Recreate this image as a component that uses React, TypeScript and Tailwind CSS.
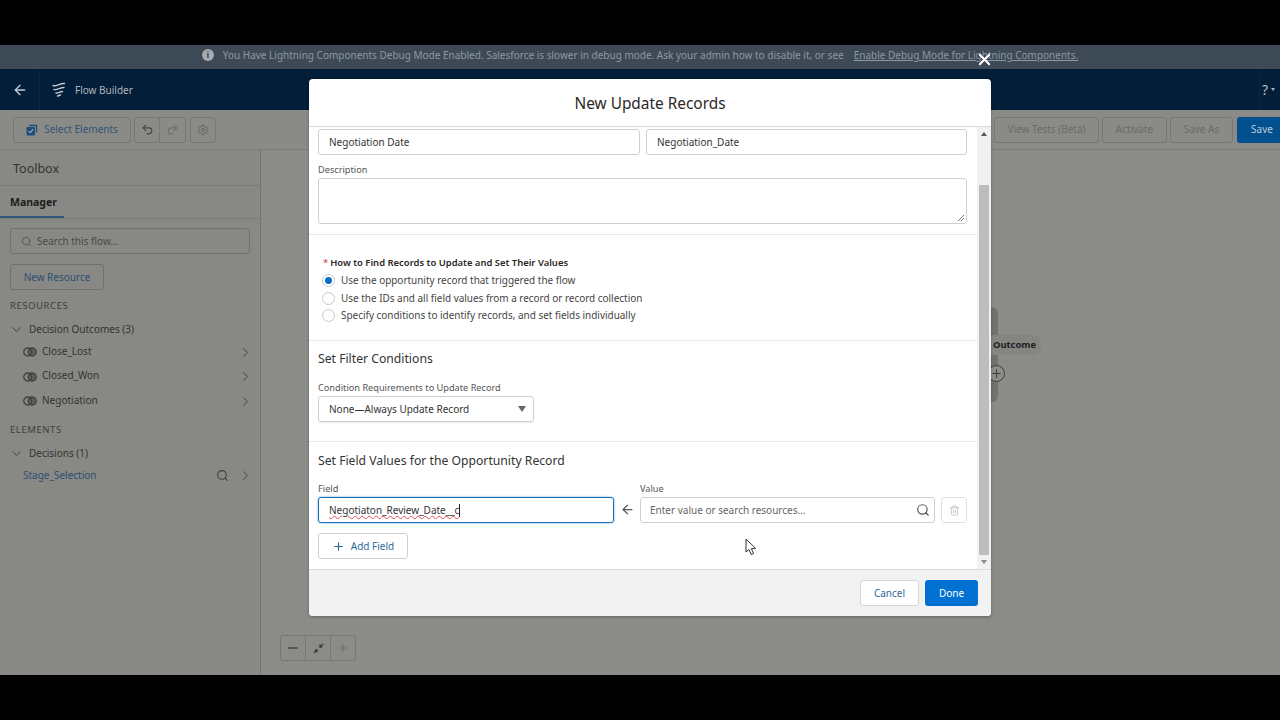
import { ArrowLeft, ChevronDown, ChevronRight, Plus, Redo2, Search, Settings, Trash2, Undo2, X, Minus } from "lucide-react";

const font = { fontFamily: '"Noto Sans", "Open Sans", sans-serif' };

function FlowLogo() {
  return (
    <svg width="15" height="15" viewBox="0 0 15 15" fill="none" stroke="#c3ccd6" strokeWidth="1.4" strokeLinecap="round">
      <path d="M1 3.5 C4 5 8 1 12.5 1.5" />
      <path d="M2 7.5 C5 8.5 8 5.5 12 5.5" />
      <path d="M4 11 C6 11.5 8 9.5 10.5 9.5" />
      <path d="M5.5 14 C6.5 14 7.5 13 8.5 13" />
    </svg>
  );
}

function OutcomeIcon() {
  return (
    <svg width="14" height="10" viewBox="0 0 14 10" fill="none" className="shrink-0">
      <circle cx="4.8" cy="5" r="4" stroke="#3f3f3d" strokeWidth="1.3" />
      <circle cx="9.2" cy="5" r="4" stroke="#3f3f3d" strokeWidth="1.3" fill="#3f3f3d" fillOpacity="0.55" />
    </svg>
  );
}

function ResourceRow({ name }: { name: string }) {
  return (
    <div className="flex items-center justify-between pl-[23px] pr-[7px] h-[24.5px]">
      <div className="flex items-center gap-[5px] text-[10px] text-[#333331]">
        <OutcomeIcon />
        <span className="-mt-[2px]">{name}</span>
      </div>
      <ChevronRight size={15} color="#3f3f3d" strokeWidth={1.5} />
    </div>
  );
}

function SectionLabel({ children }: { children: string }) {
  return <div className="text-[9.5px] leading-[14px] tracking-[0.06em] text-[#3f3f3d] pl-[10px] uppercase">{children}</div>;
}

function Sidebar() {
  return (
    <aside className="w-[261px] shrink-0 border-r border-[#747471] bg-[#888885]">
      <div className="h-[36px] pl-[13px] pt-[4px] flex items-center text-[12.5px] text-[#343432] border-b border-[#7c7c79]">Toolbox</div>
      <div className="h-[33px] border-b border-[#7c7c79] relative pl-[10px] pt-[1px] flex items-center text-[10.5px] font-bold text-[#1c1c1b]">
        Manager
        <div className="absolute left-0 bottom-0 w-[64px] h-[2px] bg-[#35577c]" />
      </div>
      <div className="mx-[10px] mt-[9px] h-[26px] border border-[#6f6f6c] rounded-[3px] flex items-center pl-[10px] gap-[5px] text-[10px] text-[#4a4a48]">
        <Search size={11} color="#555553" />
        Search this flow...
      </div>
      <div className="ml-[10px] mt-[10px] w-[94px] h-[26px] border border-[#6f6f6c] rounded-[3px] flex items-center justify-center text-[10px] text-[#2e4f70]">
        New Resource
      </div>
      <div className="mt-[9px]"><SectionLabel>Resources</SectionLabel></div>
      <div className="mt-[6px] flex items-center pl-[9px] gap-[5px] h-[20px] text-[10px] text-[#333331]">
        <ChevronDown size={15} color="#3f3f3d" strokeWidth={1.5} />
        Decision Outcomes (3)
      </div>
      <div className="mt-[1px]">
        <ResourceRow name="Close_Lost" />
        <ResourceRow name="Closed_Won" />
        <ResourceRow name="Negotiation" />
      </div>
      <div className="mt-[9px]"><SectionLabel>Elements</SectionLabel></div>
      <div className="mt-[7px] flex items-center pl-[9px] gap-[5px] h-[20px] text-[10px] text-[#333331]">
        <ChevronDown size={15} color="#3f3f3d" strokeWidth={1.5} />
        Decisions (1)
      </div>
      <div className="h-[22px] mt-[1px] flex items-center justify-between pl-[23px] pr-[7px] text-[10px] text-[#2e4f70]">
        Stage_Selection
        <div className="flex items-center gap-[9px]">
          <Search size={13} color="#3f3f3d" />
          <ChevronRight size={15} color="#3f3f3d" strokeWidth={1.5} />
        </div>
      </div>
    </aside>
  );
}

function ToolButton({ children, w }: { children: string; w: string }) {
  return (
    <div className={`h-[26px] ${w} border border-[#777774] rounded-[3px] flex items-center justify-center text-[10px] text-[#6a6a67]`}>
      {children}
    </div>
  );
}

function Radio({ label, on }: { label: string; on?: boolean }) {
  return (
    <div className="flex items-center gap-[6px] h-[17.4px] text-[9.95px] text-[#444] -ml-[1px]">
      <span className="w-[13px] h-[13px] rounded-full border border-[#c9c9c9] bg-white flex items-center justify-center">
        {on && <span className="w-[7px] h-[7px] rounded-full bg-[#0a6cc2]" />}
      </span>
      {label}
    </div>
  );
}

function Modal() {
  return (
    <div className="absolute left-[309px] top-[79px] w-[682px] h-[537px] bg-white rounded-[4px] flex flex-col overflow-hidden shadow-[0_1px_3px_rgba(0,0,0,0.3)]">
      <div className="h-[48px] shrink-0 pt-[2px] border-b border-[#dddbda] flex items-center justify-center text-[15.4px] text-[#2b2826]">
        New Update Records
      </div>
      <div className="flex-1 flex min-h-0 overflow-hidden">
        <div className="flex-1 min-w-0">
          <div className="pl-[9px] pt-[2px] border-b border-[#e8e8e8] h-[108px]">
            <div className="flex gap-[6px]">
              <div className="w-[322px] h-[26px] border border-[#cfcfcf] rounded-[3px] pl-[10px] flex items-center text-[10px] text-[#333]">Negotiation Date</div>
              <div className="w-[321px] h-[26px] border border-[#cfcfcf] rounded-[3px] pl-[10px] flex items-center text-[10px] text-[#333]">Negotiation_Date</div>
            </div>
            <div className="mt-[8px] text-[9.2px] leading-[14px] text-[#555]">Description</div>
            <div className="mt-[1px] w-[649px] h-[46px] border border-[#cfcfcf] rounded-[3px] relative">
              <svg width="8" height="8" viewBox="0 0 8 8" className="absolute right-[1px] bottom-[1px]" stroke="#777" fill="none">
                <path d="M1 7 L7 1 M4 7 L7 4" />
              </svg>
            </div>
          </div>
          <div className="h-[106px] border-b border-[#e8e8e8] pl-[14px] pt-[21px]">
            <div className="text-[9.45px] leading-[14px] font-semibold text-[#2b2826]">
              <span className="text-[#c23934] font-normal mr-[2px]">*</span>How to Find Records to Update and Set Their Values
            </div>
            <div className="mt-[2px]">
              <Radio label="Use the opportunity record that triggered the flow" on />
              <Radio label="Use the IDs and all field values from a record or record collection" />
              <Radio label="Specify conditions to identify records, and set fields individually" />
            </div>
          </div>
          <div className="h-[101px] border-b border-[#e8e8e8] pl-[9px] pt-[9px]">
            <div className="text-[12.2px] leading-[18px] text-[#333]">Set Filter Conditions</div>
            <div className="mt-[13px] text-[9.2px] leading-[14px] text-[#555]">Condition Requirements to Update Record</div>
            <div className="mt-[1px] w-[216px] h-[26px] border border-[#cfcfcf] rounded-[3px] shadow-[0_1px_1px_rgba(0,0,0,0.08)] pl-[10px] pr-[7px] flex items-center justify-between text-[10px] text-[#333]">
              None—Always Update Record
              <span className="w-0 h-0 border-x-[4.5px] border-x-transparent border-t-[6px] border-t-[#666]" />
            </div>
          </div>
          <div className="pl-[9px] pt-[10px]">
            <div className="text-[12.2px] leading-[18px] text-[#333]">Set Field Values for the Opportunity Record</div>
            <div className="mt-[12px] flex">
              <div className="w-[296px]">
                <div className="text-[9.2px] leading-[14px] text-[#555]">Field</div>
                <div className="mt-[1px] h-[26px] border border-[#1b6fb8] rounded-[3px] shadow-[0_0_2px_#4a90c8] pl-[10px] flex items-center text-[10px] text-[#333]">
                  <span className="underline decoration-wavy decoration-[#d9534f] decoration-1 underline-offset-1 border-r border-[#222] leading-[13px]">Negotiaton_Review_Date__c</span>
                </div>
              </div>
              <div className="w-[26px] pt-[15px] flex justify-center">
                <ArrowLeft size={15} color="#555" className="mt-[5px]" />
              </div>
              <div className="w-[295px]">
                <div className="text-[9.2px] leading-[14px] text-[#555]">Value</div>
                <div className="mt-[1px] h-[26px] border border-[#cfcfcf] rounded-[3px] pl-[9px] pr-[4px] flex items-center justify-between text-[10px] text-[#666]">
                  Enter value or search resources...
                  <Search size={14} color="#555" />
                </div>
              </div>
              <div className="ml-[6px] mt-[15px] w-[26px] h-[26px] border border-[#dedede] rounded-[3px] flex items-center justify-center">
                <Trash2 size={11} color="#c4c4c4" />
              </div>
            </div>
            <div className="mt-[10px] w-[90px] h-[26px] border border-[#cfcfcf] rounded-[3px] flex items-center justify-center gap-[6px] text-[10px] text-[#2d6a9a]">
              <Plus size={13} color="#2d6a9a" />
              Add Field
            </div>
          </div>
        </div>
        <div className="w-[14px] shrink-0 bg-[#f1f1f1] flex flex-col items-center relative">
          <span className="mt-[5px] w-0 h-0 border-x-[3px] border-x-transparent border-b-[4px] border-b-[#555]" />
          <div className="absolute left-[2px] right-[2px] top-[58px] h-[370px] bg-[#bdbdbd]" />
          <span className="mt-auto mb-[5px] w-0 h-0 border-x-[3px] border-x-transparent border-t-[4px] border-t-[#888]" />
        </div>
      </div>
      <div className="h-[47px] shrink-0 bg-[#f3f2f2] border-t border-[#dddbda] flex items-center justify-end gap-[6px] pr-[13px]">
        <div className="w-[59px] h-[26px] bg-white border border-[#d5d5d5] rounded-[3px] flex items-center justify-center text-[10px] text-[#2d6a9a]">Cancel</div>
        <div className="w-[53px] h-[26px] bg-[#0070d2] rounded-[3px] flex items-center justify-center text-[10px] text-white">Done</div>
      </div>
    </div>
  );
}

export default function App() {
  return (
    <div style={font} className="w-[1280px] h-[720px] bg-black overflow-hidden relative flex flex-col">
      <div className="h-[45px] shrink-0" />
      <div className="h-[24px] shrink-0 bg-[#3e4956] flex items-center justify-center gap-[9px] text-[10px] leading-[20px] pb-[4px] text-[#8d97a2]">
        <span className="w-[12px] h-[12px] rounded-full bg-[#a5abb1] flex items-center justify-center text-[9px] font-bold text-[#3e4956]">i</span>
        <span>You Have Lightning Components Debug Mode Enabled. Salesforce is slower in debug mode. Ask your admin how to disable it, or see</span>
        <span className="underline ml-[1px]">Enable Debug Mode for Lightning Components.</span>
      </div>
      <div className="h-[41px] shrink-0 bg-[#031e38] flex items-center text-[10px] text-[#aeb6bf]">
        <div className="w-[40px] h-full border-r border-[#0b2742] flex items-center justify-center">
          <ArrowLeft size={16} color="#c3ccd6" />
        </div>
        <div className="ml-[12px]"><FlowLogo /></div>
        <span className="ml-[8px] pt-[1px]">Flow Builder</span>
        <div className="ml-auto w-[26px] text-[14px] text-[#b5bdc6] pl-[2px] border-l border-[#0b2742] h-full flex items-center gap-[3px] -mr-[5px]">
          ?
          <span className="w-0 h-0 border-x-[2.5px] border-x-transparent border-t-[3px] border-t-[#aeb6bf]" />
        </div>
      </div>
      <div className="h-[40px] shrink-0 bg-[#8a8a87] border-b border-[#7c7c79] flex items-center pl-[13px]">
        <div className="w-[118px] h-[26px] border border-[#777774] rounded-[3px] flex items-center justify-center gap-[6px] text-[10px] text-[#33557a]">
          <svg width="12" height="12" viewBox="0 0 12 12">
            <path d="M3 1.5 h7.5 v7" fill="none" stroke="#1f4f7f" strokeWidth="1.3" />
            <rect x="0.5" y="3" width="8.5" height="8.5" rx="1" fill="#1f4f7f" />
            <path d="M2.5 7 L4.2 8.8 L7 5.2" fill="none" stroke="#c8d4df" strokeWidth="1" />
          </svg>
          Select Elements
        </div>
        <div className="ml-[3px] flex h-[26px] border border-[#777774] rounded-[3px]">
          <div className="w-[25px] border-r border-[#777774] flex items-center justify-center"><Undo2 size={13} color="#444" /></div>
          <div className="w-[25px] flex items-center justify-center"><Redo2 size={13} color="#6f6f6c" /></div>
        </div>
        <div className="ml-[4px] w-[26px] h-[26px] border border-[#777774] rounded-[3px] flex items-center justify-center">
          <Settings size={12} color="#686865" />
        </div>
        <div className="ml-auto flex items-center gap-[3px] -mr-[7px]">
          <ToolButton w="w-[105px]">View Tests (Beta)</ToolButton>
          <ToolButton w="w-[65px]">Activate</ToolButton>
          <ToolButton w="w-[63px]">Save As</ToolButton>
          <div className="ml-[1px] w-[50px] h-[26px] bg-[#03508f] rounded-l-[3px] flex items-center justify-center text-[10px] text-[#b9cbdc]">Save</div>
        </div>
      </div>
      <div className="h-[525px] shrink-0 flex">
        <Sidebar />
        <main className="flex-1 bg-[#8b8b87]" />
      </div>
      <div className="flex-1 bg-black" />

      {/* canvas bits peeking out from behind the modal */}
      <div className="absolute left-[985px] top-[307px] w-[13px] h-[95px] rounded-[6px] border-r-[7px] border-[#72726f]" />
      <div className="absolute left-[991px] top-[335px] h-[20px] w-[50px] pl-[2px] rounded-r-[8px] bg-[#858582] flex items-center text-[9.4px] font-bold text-[#1f1f1e]">Outcome</div>
      <div className="absolute left-[988px] top-[365px] w-[17px] h-[17px] rounded-full border border-[#3f3f3d] bg-[#8b8b87] flex items-center justify-center">
        <Plus size={13} color="#3f3f3d" />
      </div>

      <div className="absolute left-[280px] top-[635px] h-[26px] w-[76px] flex border border-[#777774] rounded-[3px]">
        <div className="w-[25px] border-r border-[#777774] flex items-center justify-center"><Minus size={14} color="#444" strokeWidth={2.2} /></div>
        <div className="w-[25px] border-r border-[#777774] flex items-center justify-center">
          <svg width="11" height="11" viewBox="0 0 11 11" stroke="#3a3a38" strokeWidth="1.4" fill="#3a3a38">
            <path d="M10 1 L7 4 M7 1.8 V4 H9.2" />
            <path d="M1 10 L4 7 M4 9.2 V7 H1.8" />
          </svg>
        </div>
        <div className="flex-1 flex items-center justify-center"><Plus size={12} color="#6f6f6c" /></div>
      </div>

      <Modal />

      <X size={19} color="#fff" strokeWidth={2.4} className="absolute left-[975px] top-[50px]" />

      {/* mouse pointer */}
      <svg width="13" height="18" viewBox="0 0 13 18" className="absolute left-[745px] top-[538px]">
        <path d="M1 1 V14 L4 11.5 L6.2 16.5 L8.6 15.5 L6.4 10.6 L10.6 10.4 Z" fill="#fff" stroke="#333" strokeWidth="1" />
      </svg>
    </div>
  );
}
